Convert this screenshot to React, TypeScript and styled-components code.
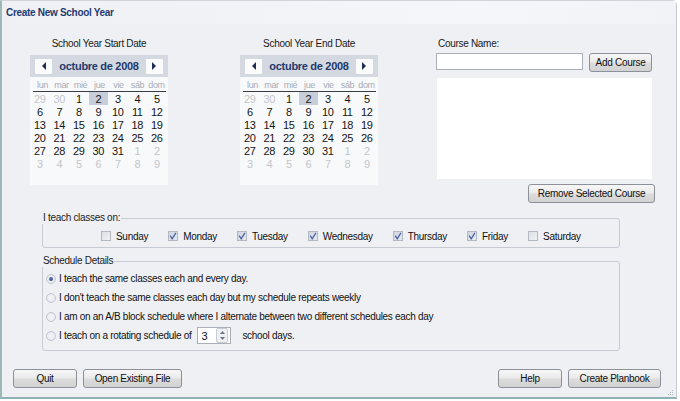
import React from "react";
import styled, { createGlobalStyle } from "styled-components";

const GlobalStyle = createGlobalStyle`
  html, body {
    margin: 0;
    padding: 0;
    background: #ffffff;
  }
  body {
    font-family: "Liberation Sans", Arial, sans-serif;
    font-size: 10px;
    letter-spacing: -0.3px;
    color: #111;
  }
`;

const Window = styled.div`
  width: 677px;
  height: 399px;
  box-sizing: border-box;
  background: #eff0f4;
  border-left: 2px solid #9cb9ba;
  border-right: 1px solid #c6cad3;
  border-bottom: 2px solid #92b1b3;
  border-top: 1px solid #d0d4da;
  border-top-right-radius: 5px;
  display: flex;
  flex-direction: column;
  position: relative;
`;

const TitleBar = styled.div`
  height: 23px;
  display: flex;
  align-items: center;
  padding-left: 4px;
  background: linear-gradient(90deg, #eef0f4 0%, #f5f6f9 70%, #f2f3f6 100%);
  font-weight: bold;
  font-size: 10px;
  color: #1f3c72;
`;

const TopRow = styled.div`
  display: flex;
  padding-left: 28px;
  margin-top: 13px;
  align-items: flex-start;
`;

const CalendarColumn = styled.div<{ $gapRight: number }>`
  width: 138px;
  margin-right: ${(p) => p.$gapRight}px;
  display: flex;
  flex-direction: column;
`;

const ColumnLabel = styled.div<{ $align?: string }>`
  height: 14px;
  line-height: 14px;
  text-align: ${(p) => p.$align || "center"};
  margin-bottom: 4px;
  color: #1a1a1a;
`;

const Calendar = styled.div`
  height: 130px;
  background: #f8f9fb;
  display: flex;
  flex-direction: column;
`;

const CalHeader = styled.div`
  height: 22px;
  background: #d4d8e0;
  display: flex;
  align-items: center;
  justify-content: space-between;
  padding: 0 5px;
`;

const NavButton = styled.div`
  width: 17px;
  height: 15px;
  background: #fbfbfc;
  border-radius: 1px;
  display: flex;
  align-items: center;
  justify-content: center;
`;

const MonthTitle = styled.div`
  font-weight: bold;
  font-size: 11px;
  color: #233a6c;
`;

const DayNames = styled.div`
  display: grid;
  grid-template-columns: repeat(7, 1fr);
  margin: 4px 2px 0 3px;
  height: 10px;
  border-bottom: 1px solid #3a3d44;
  font-size: 9px;
  line-height: 9px;
  color: #a9adb5;
  text-align: center;
`;

const DateGrid = styled.div`
  display: grid;
  grid-template-columns: repeat(7, 19.5px);
  grid-auto-rows: 13px;
  margin-top: 0;
`;

const DateCell = styled.div<{ $muted?: boolean; $selected?: boolean }>`
  display: flex;
  align-items: center;
  justify-content: center;
  font-size: 11px;
  letter-spacing: -0.4px;
  color: ${(p) => (p.$muted ? "#c4c6cb" : "#151515")};
  background: ${(p) => (p.$selected ? "#c7cdd9" : "transparent")};
`;

const CourseColumn = styled.div`
  width: 219px;
  display: flex;
  flex-direction: column;
`;

const CourseLabel = styled(ColumnLabel)`
  padding-left: 2px;
`;

const InputRow = styled.div`
  display: flex;
  align-items: flex-start;
  gap: 6px;
  margin-top: -2px;
`;

const TextInput = styled.div`
  width: 147px;
  height: 17px;
  box-sizing: border-box;
  background: #fff;
  border: 1px solid #a9b0ba;
`;

const Button = styled.div<{ $w: number }>`
  width: ${(p) => p.$w}px;
  height: 19px;
  box-sizing: border-box;
  display: flex;
  align-items: center;
  justify-content: center;
  border: 1px solid #8c9098;
  border-radius: 3px;
  background: linear-gradient(#f7f7f7 0%, #ebebeb 45%, #dcdcdc 55%, #d2d2d2 100%);
  color: #111;
  font-size: 10px;
`;

const CourseList = styled.div`
  width: 215px;
  height: 101px;
  margin: 6px 0 0 1px;
  background: #ffffff;
`;

const RemoveRow = styled.div`
  display: flex;
  justify-content: flex-end;
  margin-top: 5px;
`;

const Group = styled.fieldset<{ $top: number }>`
  margin: ${(p) => p.$top}px 0 0 40px;
  width: 578px;
  box-sizing: border-box;
  border: 1px solid #c6cad2;
  border-radius: 3px;
  padding: 0 0 5px 2px;
`;

const Legend = styled.legend`
  padding: 0 1px;
  margin-left: -3px;
  line-height: 12px;
  color: #222;
`;

const DayRow = styled.div`
  display: flex;
  gap: 20px;
  padding: 6px 0 0 56px;
  height: 12px;
  align-items: center;
`;

const CheckItem = styled.label`
  display: flex;
  align-items: center;
  gap: 5px;
`;

const Box = styled.span<{ $checked: boolean }>`
  width: 10px;
  height: 10px;
  box-sizing: border-box;
  border: 1px solid #b3b8c2;
  background: ${(p) =>
    p.$checked
      ? "linear-gradient(135deg, #cfd5e2, #e6e9f0)"
      : "linear-gradient(135deg, #dcdfe5, #f1f2f5)"};
  display: flex;
  align-items: center;
  justify-content: center;
`;

const RadioList = styled.div`
  padding-top: 2px;
`;

const RadioRow = styled.div`
  display: flex;
  align-items: center;
  gap: 3px;
  height: 19px;
  padding-left: 1px;
`;

const Radio = styled.span<{ $on: boolean }>`
  width: 10px;
  height: 10px;
  box-sizing: border-box;
  border-radius: 50%;
  border: 1px solid #c2c6ce;
  background: radial-gradient(circle, #f4f5f8 0%, #e2e5ea 100%);
  display: flex;
  align-items: center;
  justify-content: center;
  &::after {
    content: "";
    display: ${(p) => (p.$on ? "block" : "none")};
    width: 4px;
    height: 4px;
    border-radius: 50%;
    background: radial-gradient(circle at 40% 40%, #6a7fc0, #1e2f6e);
  }
`;

const SpinBox = styled.div`
  width: 34px;
  height: 17px;
  box-sizing: border-box;
  background: #fff;
  border: 1px solid #a9b0ba;
  display: flex;
  align-items: center;
  justify-content: space-between;
  padding-left: 3px;
  margin: 0 8px 0 3px;
  font-size: 11px;
`;

const SpinArrows = styled.div`
  width: 10px;
  height: 13px;
  margin-right: 2px;
  border: 1px solid #c8ccd3;
  border-radius: 2px;
  background: #eef0f3;
  display: flex;
  flex-direction: column;
  align-items: center;
  justify-content: space-around;
`;

const BottomBar = styled.div`
  display: flex;
  justify-content: space-between;
  padding: 0 15px 0 11px;
  margin-top: 18px;
`;

const ButtonGroup = styled.div`
  display: flex;
  gap: 6px;
`;

const Grip = styled.svg`
  position: absolute;
  right: 2px;
  bottom: 1px;
`;

const Arrow: React.FC<{ dir: "left" | "right" }> = ({ dir }) => (
  <svg width="6" height="8" viewBox="0 0 6 8">
    {dir === "left" ? (
      <polygon points="5,0 5,8 1,4" fill="#1f2e55" />
    ) : (
      <polygon points="1,0 1,8 5,4" fill="#1f2e55" />
    )}
  </svg>
);

const Check = () => (
  <svg width="8" height="8" viewBox="0 0 8 8">
    <path d="M1.2 3.6 L3.2 6.8 L6.9 0.8" fill="none" stroke="#4c64a3" strokeWidth="1.3" />
  </svg>
);

const dayNames = ["lun", "mar", "mié", "jue", "vie", "sáb", "dom"];

// oct 2008 starts on a wednesday, grid starts monday 29 sep
const buildDays = () => {
  const cells: { d: number; muted: boolean }[] = [];
  cells.push({ d: 29, muted: true }, { d: 30, muted: true });
  for (let i = 1; i <= 31; i++) cells.push({ d: i, muted: false });
  for (let i = 1; cells.length < 42; i++) cells.push({ d: i, muted: true });
  return cells;
};

const MonthCalendar: React.FC = () => (
  <Calendar>
    <CalHeader>
      <NavButton>
        <Arrow dir="left" />
      </NavButton>
      <MonthTitle>octubre de 2008</MonthTitle>
      <NavButton>
        <Arrow dir="right" />
      </NavButton>
    </CalHeader>
    <DayNames>
      {dayNames.map((n) => (
        <span key={n}>{n}</span>
      ))}
    </DayNames>
    <DateGrid>
      {buildDays().map((c, i) => (
        <DateCell key={i} $muted={c.muted} $selected={!c.muted && c.d === 2}>
          {c.d}
        </DateCell>
      ))}
    </DateGrid>
  </Calendar>
);

const weekDays = [
  { name: "Sunday", on: false },
  { name: "Monday", on: true },
  { name: "Tuesday", on: true },
  { name: "Wednesday", on: true },
  { name: "Thursday", on: true },
  { name: "Friday", on: true },
  { name: "Saturday", on: false },
];

const App: React.FC = () => {
  return (
    <>
      <GlobalStyle />
      <Window>
        <TitleBar>Create New School Year</TitleBar>
        <TopRow>
          <CalendarColumn $gapRight={72}>
            <ColumnLabel>School Year Start Date</ColumnLabel>
            <MonthCalendar />
          </CalendarColumn>
          <CalendarColumn $gapRight={58}>
            <ColumnLabel>School Year End Date</ColumnLabel>
            <MonthCalendar />
          </CalendarColumn>
          <CourseColumn>
            <CourseLabel $align="left">Course Name:</CourseLabel>
            <InputRow>
              <TextInput />
              <Button $w={63}>Add Course</Button>
            </InputRow>
            <CourseList />
            <RemoveRow>
              <Button $w={127}>Remove Selected Course</Button>
            </RemoveRow>
          </CourseColumn>
        </TopRow>

        <Group $top={9}>
          <Legend>I teach classes on:</Legend>
          <DayRow>
            {weekDays.map((d) => (
              <CheckItem key={d.name}>
                <Box $checked={d.on}>{d.on && <Check />}</Box>
                {d.name}
              </CheckItem>
            ))}
          </DayRow>
        </Group>

        <Group $top={7}>
          <Legend>Schedule Details</Legend>
          <RadioList>
            <RadioRow>
              <Radio $on />
              I teach the same classes each and every day.
            </RadioRow>
            <RadioRow>
              <Radio $on={false} />
              I don't teach the same classes each day but my schedule repeats weekly
            </RadioRow>
            <RadioRow>
              <Radio $on={false} />
              I am on an A/B block schedule where I alternate between two different schedules each day
            </RadioRow>
            <RadioRow>
              <Radio $on={false} />
              I teach on a rotating schedule of
              <SpinBox>
                3
                <SpinArrows>
                  <svg width="5" height="3" viewBox="0 0 5 3">
                    <polygon points="0,3 5,3 2.5,0" fill="#6b7688" />
                  </svg>
                  <svg width="5" height="3" viewBox="0 0 5 3">
                    <polygon points="0,0 5,0 2.5,3" fill="#6b7688" />
                  </svg>
                </SpinArrows>
              </SpinBox>
              school days.
            </RadioRow>
          </RadioList>
        </Group>

        <BottomBar>
          <ButtonGroup>
            <Button $w={64}>Quit</Button>
            <Button $w={99}>Open Existing File</Button>
          </ButtonGroup>
          <ButtonGroup>
            <Button $w={64}>Help</Button>
            <Button $w={93}>Create Planbook</Button>
          </ButtonGroup>
        </BottomBar>
        <Grip width="6" height="6" viewBox="0 0 6 6">
          <rect x="4" y="0" width="1" height="1" fill="#b5bac2" />
          <rect x="2" y="2" width="1" height="1" fill="#b5bac2" />
          <rect x="4" y="2" width="1" height="1" fill="#b5bac2" />
          <rect x="0" y="4" width="1" height="1" fill="#b5bac2" />
          <rect x="2" y="4" width="1" height="1" fill="#b5bac2" />
          <rect x="4" y="4" width="1" height="1" fill="#b5bac2" />
        </Grip>
      </Window>
    </>
  );
};

export default App;
